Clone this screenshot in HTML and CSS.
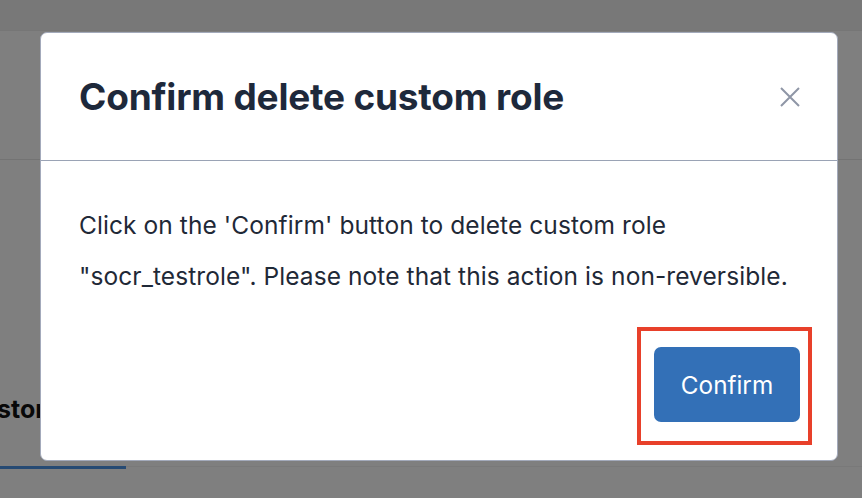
FILE: index.html
```html
<!DOCTYPE html>
<html>
<head>
<meta charset="utf-8">
<link rel="stylesheet" href="styles.css">
</head>
<body>
<div class="page">
  <div class="topbar"></div>
  <div class="section-head"></div>
  <div class="content">
    <div class="tabs">
      <div class="tab">Custom roles</div>
    </div>
  </div>
</div>
<div class="overlay">
  <div class="modal">
    <div class="modal-header">
      <h2 class="modal-title">Confirm delete custom role</h2>
      <button class="close" aria-label="Close">
        <svg width="20" height="20" viewBox="0 0 20 20"><path d="M1 1 L19 19 M19 1 L1 19" stroke="#8f96a6" stroke-width="2" fill="none"/></svg>
      </button>
    </div>
    <div class="modal-body">
      <p>Click on the 'Confirm' button to delete custom role "socr_testrole". Please note that this action is non-reversible.</p>
    </div>
    <div class="modal-footer">
      <div class="highlight">
        <button class="btn-primary">Confirm</button>
      </div>
    </div>
  </div>
</div>
</body>
</html>
```

FILE: styles.css
```css
html, body {
  margin: 0;
  padding: 0;
}
body {
  width: 862px;
  height: 498px;
  overflow: hidden;
  position: relative;
  font-family: Inter, "Noto Sans", "Liberation Sans", sans-serif;
  background: #ffffff;
}
.page {
  height: 498px;
  display: flex;
  flex-direction: column;
}
.topbar {
  height: 30px;
  background: #f0f0f0;
  border-bottom: 1px solid #ececec;
}
.section-head {
  height: 128px;
  border-bottom: 1px solid #e6e6e6;
}
.content {
  flex: 1;
  position: relative;
}
.tabs {
  padding-top: 234px;
  border-bottom: 1px solid #f2f2f2;
  height: 72px;
}
.tab {
  margin-left: -37px;
  font-weight: 700;
  font-size: 25px;
  color: #111;
  white-space: nowrap;
}
.overlay {
  position: absolute;
  inset: 0;
  background: rgba(0, 0, 0, 0.5);
  padding: 32px 0 0 40px;
  box-sizing: border-box;
}
.overlay::after {
  content: "";
  position: absolute;
  left: 0;
  top: 466px;
  width: 126px;
  height: 3px;
  background: #264a73;
}
.modal {
  width: 798px;
  height: 429px;
  box-sizing: border-box;
  background: #fff;
  border: 1px solid #a3aabb;
  border-radius: 7px;
  display: flex;
  flex-direction: column;
}
.modal-header {
  height: 128px;
  box-sizing: border-box;
  border-bottom: 1px solid #9aa3b5;
  display: flex;
  align-items: center;
  justify-content: space-between;
  padding: 0 37px 0 38px;
}
.modal-title {
  margin: 0;
  font-size: 37px;
  font-weight: 700;
  color: #1e293b;
  letter-spacing: -0.2px;
}
.close {
  background: none;
  border: 0;
  padding: 0;
  width: 20px;
  height: 20px;
  display: flex;
}
.modal-body {
  padding: 39px 38px 0 38px;
}
.modal-body p {
  margin: 0;
  font-size: 24.5px;
  line-height: 51px;
  letter-spacing: 0.08px;
  color: #1f2937;
  max-width: 716px;
}
.modal-footer {
  flex: 1;
  display: flex;
  justify-content: flex-end;
  align-items: flex-end;
  padding: 0 37px 38px 0;
}
.highlight {
  position: relative;
}
.highlight::after {
  content: "";
  position: absolute;
  left: -17px;
  top: -20px;
  right: -12px;
  bottom: -23px;
  border: 4px solid #e8402a;
}
.btn-primary {
  width: 146px;
  height: 75px;
  background: #3370b7;
  color: #fff;
  border: 0;
  border-radius: 7px;
  font-family: Inter, "Noto Sans", "Liberation Sans", sans-serif;
  font-size: 24.3px;
  display: block;
}
```
